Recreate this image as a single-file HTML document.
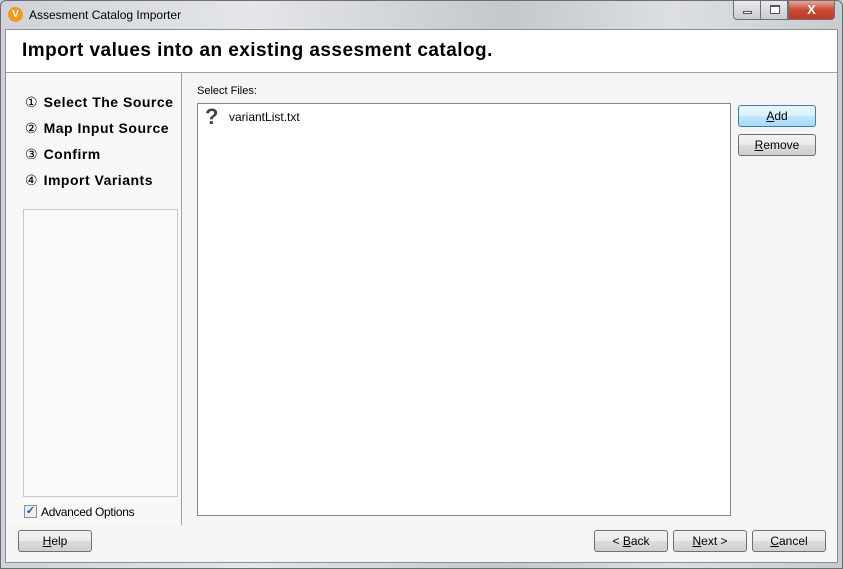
<!DOCTYPE html>
<html><head><style>
*{margin:0;padding:0;box-sizing:border-box}
body{width:843px;height:569px;overflow:hidden;background:#c9ced6;font-family:"Liberation Sans",sans-serif;position:relative}
.frame{position:absolute;left:0;top:0;width:843px;height:569px;border:1px solid #6b6f75;border-radius:6px 6px 0 0;background:linear-gradient(90deg,#cfd3d8,#e4e6e9 30%,#c4c8cd 60%,#dcdfe2 80%,#c8ccd1)}
.title{position:absolute;left:29px;top:8px;font-size:12px;color:#000}
.logo{position:absolute;left:8px;top:7px;width:15px;height:15px;border-radius:50%;background:#f39a1e;color:#fff;font-size:10px;font-weight:bold;text-align:center;line-height:15px}
.client{position:absolute;left:5px;top:29px;width:833px;height:534px;background:#f5f5f5;border:1px solid #8a8e94}
.head{position:absolute;left:0;top:0;width:831px;height:43px;background:#fff;border-bottom:1px solid #a0a0a0}
.head h1{position:absolute;left:16px;top:10px;font-size:19px;font-weight:bold;letter-spacing:0.45px}
.left{position:absolute;left:0;top:43px;width:176px;height:452px;background:#f8f8f8;border-right:1px solid #a0a0a0}
.step{position:absolute;left:19px;font-size:14px;font-weight:bold;letter-spacing:0.5px}
.step span{font-weight:normal;margin-right:6px;letter-spacing:0}
.box{position:absolute;left:17px;top:136px;width:155px;height:288px;border:1px solid #c8c8d0;background:#fafafa}
.btn{position:absolute;height:22px;border:1px solid #707070;border-radius:3px;background:linear-gradient(#f2f2f2,#ebebeb 50%,#dddddd 51%,#cfcfcf);font-size:12px;text-align:center;line-height:20px}
.list{position:absolute;left:191px;top:73px;width:534px;height:413px;background:#fff;border:1px solid #828790}
.wbtn{position:absolute;top:1px;height:19px;border:1px solid #6b6f75;border-top:none}
</style></head><body>
<div class="frame"></div>
<div class="wbtn" style="left:733px;width:28px;border-radius:0 0 0 4px;background:linear-gradient(#e8eaec,#c9ccd0)"><div style="position:absolute;left:9px;top:10px;width:9px;height:3px;border:1px solid #555;background:#fff"></div></div>
<div class="wbtn" style="left:760px;width:28px;background:linear-gradient(#e8eaec,#c9ccd0)"><div style="position:absolute;left:9px;top:4px;width:10px;height:9px;border:1px solid #555;border-top-width:2px;background:#fff"></div></div>
<div class="wbtn" style="left:788px;width:47px;border-radius:0 0 4px 0;background:linear-gradient(#e8a79a,#c74a35 50%,#c03a22);color:#fff;font-weight:bold;font-size:13px;text-align:center;line-height:17px">X</div>
<div class="logo">V</div>
<div class="title">Assesment Catalog Importer</div>
<div class="client">
<div class="head"><h1>Import values into an existing assesment catalog.</h1></div>
<div class="left">
<div class="step" style="top:21px"><span>①</span>Select The Source</div>
<div class="step" style="top:47px"><span>②</span>Map Input Source</div>
<div class="step" style="top:73px"><span>③</span>Confirm</div>
<div class="step" style="top:99px"><span>④</span>Import Variants</div>
<div class="box"></div>
<div style="position:absolute;left:18px;top:432px;width:13px;height:13px;border:1px solid #8f8f8f;background:#e8eef8;color:#2a4ea8;font-size:11px;line-height:11px;text-align:center;font-weight:bold">✓</div>
<div style="position:absolute;left:35px;top:432px;font-size:12px;letter-spacing:-0.3px">Advanced Options</div>
</div>
<div style="position:absolute;left:191px;top:55px;font-size:11px">Select Files:</div>
<div class="list">
<div style="position:absolute;left:7px;top:0px;font-size:22px;font-weight:bold;color:#444">?</div>
<div style="position:absolute;left:31px;top:6px;font-size:12px">variantList.txt</div>
</div>
<div class="btn" style="left:732px;top:75px;width:78px;border-color:#3c7fb1;background:linear-gradient(#eaf6fd,#d9f0fc 50%,#bee6fd 51%,#a7d9f5)"><u>A</u>dd</div>
<div class="btn" style="left:732px;top:104px;width:78px"><u>R</u>emove</div>
<div class="btn" style="left:12px;top:500px;width:74px"><u>H</u>elp</div>
<div class="btn" style="left:588px;top:500px;width:74px">&lt; <u>B</u>ack</div>
<div class="btn" style="left:667px;top:500px;width:74px"><u>N</u>ext &gt;</div>
<div class="btn" style="left:746px;top:500px;width:74px"><u>C</u>ancel</div>
</div>
</body></html>
